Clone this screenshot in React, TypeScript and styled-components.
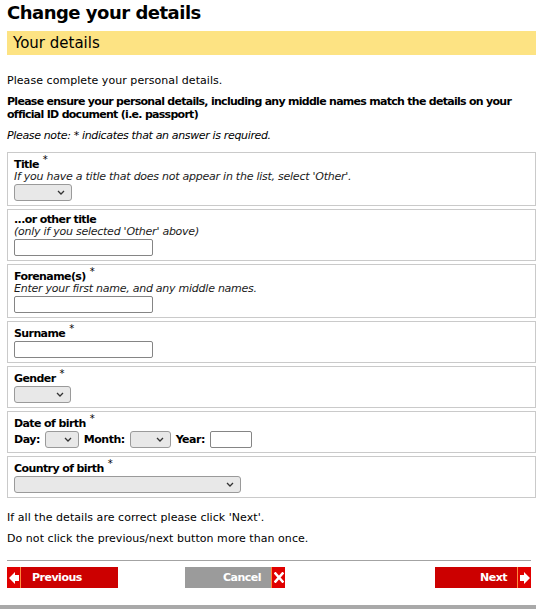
import styled, { createGlobalStyle } from 'styled-components'

const GlobalStyle = createGlobalStyle`
  body {
    margin: 0;
    background: #ffffff;
    font-family: 'DejaVu Sans', Verdana, sans-serif;
    font-size: 11px;
    color: #000000;
  }
`

const chevron =
  "url(\"data:image/svg+xml;charset=US-ASCII,%3Csvg%20xmlns%3D%22http%3A//www.w3.org/2000/svg%22%20width%3D%228%22%20height%3D%225%22%20viewBox%3D%220%200%208%205%22%3E%3Cpath%20d%3D%22M1%201L4%204L7%201%22%20fill%3D%22none%22%20stroke%3D%22%23333%22%20stroke-width%3D%221.3%22/%3E%3C/svg%3E\")"

const Page = styled.div`
  width: 529px;
  padding: 1px 0 0 7px;
`

const Heading = styled.h1`
  margin: 0;
  font-size: 18px;
  line-height: 24px;
  font-weight: bold;
  letter-spacing: -0.5px;
`

const SectionBar = styled.h2`
  margin: 6px 0 0;
  height: 24px;
  line-height: 24px;
  padding-left: 6px;
  background: #fde383;
  font-size: 15px;
  font-weight: normal;
`

const Intro = styled.div`
  margin-top: 19px;
`

const Para = styled.p<{ $bold?: boolean; $italic?: boolean }>`
  margin: 0 0 8px;
  line-height: 13px;
  font-weight: ${(p) => (p.$bold ? 'bold' : 'normal')};
  font-style: ${(p) => (p.$italic ? 'italic' : 'normal')};
  letter-spacing: ${(p) => (p.$bold ? '-0.72px' : p.$italic ? '-0.35px' : '0.05px')};
`

const Questions = styled.div`
  margin-top: 10px;
  display: flex;
  flex-direction: column;
  row-gap: 3px;
`

const Question = styled.div`
  border: 1px solid #cacaca;
  padding: 3px 6px 4px;
`

const Label = styled.div<{ $required?: boolean }>`
  font-weight: bold;
  line-height: 13px;
  letter-spacing: -0.6px;
  padding-top: ${(p) => (p.$required ? '2px' : '0')};
`

const Star = styled.span`
  font-weight: normal;
  font-size: 10px;
  line-height: 0;
  letter-spacing: 0;
  vertical-align: 5px;
  margin-left: 4px;
`

const Hint = styled.div`
  font-style: italic;
  line-height: 12px;
  letter-spacing: -0.25px;
  color: #1a1a1a;
`

const Controls = styled.div`
  margin-top: 1px;
  display: flex;
  align-items: center;
  column-gap: 5px;
`

const TextInput = styled.input<{ $width: number }>`
  box-sizing: border-box;
  width: ${(p) => p.$width}px;
  height: 17px;
  margin: 0;
  padding: 0 3px;
  border: 1px solid #858585;
  border-radius: 2px;
  background: #ffffff;
  font: inherit;
`

const Select = styled.select<{ $width: number }>`
  appearance: none;
  box-sizing: border-box;
  width: ${(p) => p.$width}px;
  height: 17px;
  margin: 0;
  padding: 0 3px;
  border: 1px solid #9a9a9a;
  border-radius: 3px;
  background: #e8e8e8 ${chevron} no-repeat right 6px center;
  font: inherit;
`

const FieldName = styled.span`
  font-weight: bold;
  letter-spacing: -0.5px;
`

const Footer = styled.div`
  margin-top: 13px;
`

const Rule = styled.div`
  width: 524px;
  margin-top: 15px;
  border-top: 1px solid #a3a3a3;
`

const ButtonRow = styled.div`
  width: 524px;
  margin-top: 6px;
  display: flex;
  align-items: stretch;
  height: 21px;
`

const Button = styled.div<{ $width: number; $offset?: string }>`
  display: flex;
  width: ${(p) => p.$width}px;
  margin-left: ${(p) => p.$offset ?? '0'};
  cursor: pointer;
`

const ButtonLabel = styled.div<{ $gray?: boolean; $align: 'left' | 'right' }>`
  flex: 1;
  display: flex;
  align-items: center;
  justify-content: ${(p) => (p.$align === 'left' ? 'flex-start' : 'flex-end')};
  padding: ${(p) => (p.$align === 'left' ? '0 0 0 11px' : '0 10px 0 0')};
  background: ${(p) => (p.$gray ? '#9b9b9b' : '#cc0000')};
  color: #ffffff;
  font-weight: bold;
  font-size: 11px;
  letter-spacing: -0.5px;
`

const ButtonIcon = styled.div<{ $side: 'left' | 'right' }>`
  width: 13px;
  display: flex;
  align-items: center;
  justify-content: center;
  background: #e00000;
  border-${(p) => (p.$side === 'left' ? 'right' : 'left')}: 1px solid #ff8a3d;
`

const BottomBar = styled.div`
  margin: 17px 0 0 -7px;
  width: 536px;
  height: 4px;
  background: #a9a9a9;
`

function LeftArrow() {
  return (
    <svg width='10' height='12' viewBox='0 0 10 12'>
      <polygon points='0,6 6,0 6,3 10,3 10,9 6,9 6,12' fill='#ffffff' />
    </svg>
  )
}

function RightArrow() {
  return (
    <svg width='10' height='12' viewBox='0 0 10 12'>
      <polygon points='10,6 4,0 4,3 0,3 0,9 4,9 4,12' fill='#ffffff' />
    </svg>
  )
}

function Cross() {
  return (
    <svg width='10' height='11' viewBox='0 0 10 11'>
      <path d='M1.5 1.5L8.5 9.5M8.5 1.5L1.5 9.5' stroke='#ffffff' strokeWidth='2.6' strokeLinecap='square' />
    </svg>
  )
}

export default function App() {
  return (
    <>
      <GlobalStyle />
      <Page>
        <Heading>Change your details</Heading>
        <SectionBar>Your details</SectionBar>

        <Intro>
          <Para>Please complete your personal details.</Para>
          <Para $bold>
            Please ensure your personal details, including any middle names match the details on your
            official ID document (i.e. passport)
          </Para>
          <Para $italic>Please note: * indicates that an answer is required.</Para>
        </Intro>

        <Questions>
          <Question>
            <Label $required>
              Title<Star>*</Star>
            </Label>
            <Hint>If you have a title that does not appear in the list, select 'Other'.</Hint>
            <Controls>
              <Select $width={58}>
                <option></option>
              </Select>
            </Controls>
          </Question>

          <Question>
            <Label>...or other title</Label>
            <Hint>(only if you selected 'Other' above)</Hint>
            <Controls>
              <TextInput $width={139} />
            </Controls>
          </Question>

          <Question>
            <Label $required>
              Forename(s)<Star>*</Star>
            </Label>
            <Hint>Enter your first name, and any middle names.</Hint>
            <Controls>
              <TextInput $width={139} />
            </Controls>
          </Question>

          <Question>
            <Label $required>
              Surname<Star>*</Star>
            </Label>
            <Controls>
              <TextInput $width={139} />
            </Controls>
          </Question>

          <Question>
            <Label $required>
              Gender<Star>*</Star>
            </Label>
            <Controls>
              <Select $width={57}>
                <option></option>
              </Select>
            </Controls>
          </Question>

          <Question>
            <Label $required>
              Date of birth<Star>*</Star>
            </Label>
            <Controls>
              <FieldName>Day:</FieldName>
              <Select $width={34}>
                <option></option>
              </Select>
              <FieldName>Month:</FieldName>
              <Select $width={41}>
                <option></option>
              </Select>
              <FieldName>Year:</FieldName>
              <TextInput $width={42} />
            </Controls>
          </Question>

          <Question>
            <Label $required>
              Country of birth<Star>*</Star>
            </Label>
            <Controls>
              <Select $width={227}>
                <option></option>
              </Select>
            </Controls>
          </Question>
        </Questions>

        <Footer>
          <Para>If all the details are correct please click 'Next'.</Para>
          <Para>Do not click the previous/next button more than once.</Para>
        </Footer>

        <Rule />
        <ButtonRow>
          <Button $width={111}>
            <ButtonIcon $side='left'>
              <LeftArrow />
            </ButtonIcon>
            <ButtonLabel $align='left'>Previous</ButtonLabel>
          </Button>
          <Button $width={100} $offset='67px'>
            <ButtonLabel $gray $align='right'>
              Cancel
            </ButtonLabel>
            <ButtonIcon $side='right'>
              <Cross />
            </ButtonIcon>
          </Button>
          <Button $width={96} $offset='auto'>
            <ButtonLabel $align='right'>Next</ButtonLabel>
            <ButtonIcon $side='right'>
              <RightArrow />
            </ButtonIcon>
          </Button>
        </ButtonRow>
        <BottomBar />
      </Page>
    </>
  )
}
